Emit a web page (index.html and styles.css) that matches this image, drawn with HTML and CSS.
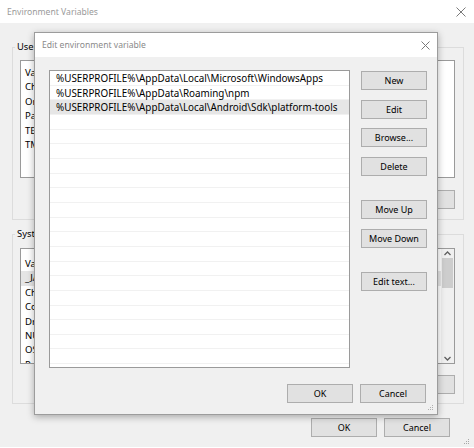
FILE: index.html
```html
<!DOCTYPE html>
<html>
<head>
<meta charset="utf-8">
<title>Edit environment variable</title>
<link rel="stylesheet" href="styles.css">
</head>
<body>
<div class="win">
  <div class="win-title">
    <span>Environment Variables</span>
    <svg class="close" viewBox="0 0 10 10"><path d="M0.5 0.5 L9.5 9.5 M9.5 0.5 L0.5 9.5" stroke="#7a7a7a" stroke-width="1" fill="none"/></svg>
  </div>
  <fieldset class="group user">
    <legend>User variables for user</legend>
    <div class="listview">
      <div class="lv-body">
        <div class="lv-row"><span class="c1">Variable</span><span class="c2">Value</span></div>
        <div class="lv-row"><span class="c1">ChocolateyLastPathUpdate</span><span class="c2">132456789012345678</span></div>
        <div class="lv-row"><span class="c1">OneDrive</span><span class="c2">C:\Users\user\OneDrive</span></div>
        <div class="lv-row"><span class="c1">Path</span><span class="c2">%USERPROFILE%\AppData\Local\Microsoft\WindowsApps;</span></div>
        <div class="lv-row"><span class="c1">TEMP</span><span class="c2">%USERPROFILE%\AppData\Local\Temp</span></div>
        <div class="lv-row"><span class="c1">TMP</span><span class="c2">%USERPROFILE%\AppData\Local\Temp</span></div>
      </div>
    </div>
    <div class="btns">
      <button class="btn wide">New...</button>
      <button class="btn wide">Edit...</button>
      <button class="btn wide">Delete</button>
    </div>
  </fieldset>
  <fieldset class="group sys">
    <legend>System variables</legend>
    <div class="listview sys">
      <div class="lv-body">
        <div class="lv-row"><span class="c1">Variable</span><span class="c2">Value</span></div>
        <div class="lv-row sel"><span class="c1">_JAVA_OPTIONS</span><span class="c2">-Xmx512M</span></div>
        <div class="lv-row"><span class="c1">ChocolateyInstall</span><span class="c2">C:\ProgramData\chocolatey</span></div>
        <div class="lv-row"><span class="c1">ComSpec</span><span class="c2">C:\WINDOWS\system32\cmd.exe</span></div>
        <div class="lv-row"><span class="c1">DriverData</span><span class="c2">C:\Windows\System32\Drivers\DriverData</span></div>
        <div class="lv-row"><span class="c1">NUMBER_OF_PROCESSORS</span><span class="c2">8</span></div>
        <div class="lv-row"><span class="c1">OS</span><span class="c2">Windows_NT</span></div>
        <div class="lv-row"><span class="c1">Path</span><span class="c2">C:\WINDOWS\system32;C:\WINDOWS</span></div>
      </div>
      <div class="vscroll">
        <svg class="arrow" viewBox="0 0 13 8"><path d="M3.5 5.5 L6.5 2.5 L9.5 5.5" stroke="#606060" stroke-width="1.3" fill="none"/></svg>
        <div class="track"><div class="thumb"></div></div>
        <svg class="arrow" viewBox="0 0 13 8"><path d="M3.5 2.5 L6.5 5.5 L9.5 2.5" stroke="#606060" stroke-width="1.3" fill="none"/></svg>
      </div>
    </div>
    <div class="btns">
      <button class="btn wide">New...</button>
      <button class="btn wide">Edit...</button>
      <button class="btn wide">Delete</button>
    </div>
  </fieldset>
  <div class="win-foot">
    <button class="btn">OK</button>
    <button class="btn">Cancel</button>
  </div>
  <svg class="grip win-grip" viewBox="0 0 6 6"><path d="M4 0h1v1H4zM2 2h1v1H2zM4 2h1v1H4zM0 4h1v1H0zM2 4h1v1H2zM4 4h1v1H4z" fill="#a8a8a8"/></svg>
</div>

<div class="dlg">
  <div class="dlg-title">
    <span>Edit environment variable</span>
    <svg class="close small" viewBox="0 0 9 9"><path d="M0.5 0.5 L8.5 8.5 M8.5 0.5 L0.5 8.5" stroke="#7a7a7a" stroke-width="1" fill="none"/></svg>
  </div>
  <div class="dlg-body">
    <div class="dlg-main">
      <div class="pathlist">
        <div class="prow">%USERPROFILE%\AppData\Local\Microsoft\WindowsApps</div>
        <div class="prow">%USERPROFILE%\AppData\Roaming\npm</div>
        <div class="prow sel">%USERPROFILE%\AppData\Local\Android\Sdk\platform-tools</div>
        <div class="prow"></div><div class="prow"></div><div class="prow"></div>
        <div class="prow"></div><div class="prow"></div><div class="prow"></div>
        <div class="prow"></div><div class="prow"></div><div class="prow"></div>
        <div class="prow"></div><div class="prow"></div><div class="prow"></div>
        <div class="prow"></div><div class="prow"></div><div class="prow"></div>
        <div class="prow"></div><div class="prow"></div><div class="prow"></div>
      </div>
      <div class="side">
        <button class="btn">New</button>
        <button class="btn">Edit</button>
        <button class="btn">Browse...</button>
        <button class="btn">Delete</button>
        <button class="btn spaced">Move Up</button>
        <button class="btn">Move Down</button>
        <button class="btn spaced">Edit text...</button>
      </div>
    </div>
    <div class="dlg-foot">
      <button class="btn">OK</button>
      <button class="btn">Cancel</button>
    </div>
  </div>
  <svg class="grip dlg-grip" viewBox="0 0 6 6"><path d="M4 0h1v1H4zM2 2h1v1H2zM4 2h1v1H4zM0 4h1v1H0zM2 4h1v1H2zM4 4h1v1H4z" fill="#b0b0b0"/></svg>
</div>
</body>
</html>
```
FILE: styles.css
```css
* { box-sizing: border-box; }
html, body { margin: 0; padding: 0; }
body {
  width: 474px;
  height: 448px;
  overflow: hidden;
  position: relative;
  background: #ffffff;
  font-family: "Noto Sans", "Segoe UI", sans-serif;
  font-size: 10px;
  color: #000;
}

/* background window */
.win {
  height: 447px;
  background: #f0f0f0;
  display: flex;
  flex-direction: column;
  position: relative;
}
.win-title {
  flex: none;
  height: 23px;
  background: #fff;
  display: flex;
  align-items: center;
  justify-content: space-between;
  padding: 0 8px 0 7px;
  color: #9a9a9a;
  font-size: 8.6px;
}
.close { width: 10px; height: 10px; display: block; }
.close.small { width: 9px; height: 9px; }

.group {
  border: 1px solid #dcdcdc;
  margin: 0 10px 0 12px;
  padding: 6px 8px 10px 7px;
  min-width: 0;
}
.group.user { margin-top: 17px; }
.group.sys { margin-top: 7px; padding-top: 7px; padding-bottom: 9px; }
.group legend {
  padding: 0 2px;
  margin-left: -5px;
  line-height: 14px;
  font-size: 9.4px;
}

.listview {
  background: #fff;
  border: 1px solid #9a9a9a;
  height: 118px;
  overflow: hidden;
  display: flex;
}
.listview.sys { height: 116px; }
.lv-body { flex: 1; padding-top: 5px; min-width: 0; }
.listview.sys .lv-body { padding-top: 8px; }
.lv-row {
  height: 14.4px;
  line-height: 14.4px;
  padding-left: 4px;
  white-space: nowrap;
  display: flex;
  font-size: 9.6px;
}
.lv-row.sel { background: #e5e5e5; }
.lv-row .c1 { width: 150px; flex: none; }
.lv-row .c2 { width: 200px; flex: none; overflow: hidden; text-overflow: ellipsis; }

.vscroll {
  width: 13px;
  flex: none;
  background: #f0f0f0;
  display: flex;
  flex-direction: column;
}
.vscroll .arrow { width: 13px; height: 9px; display: block; flex: none; }
.vscroll .track { flex: 1; padding: 0 1px; }
.vscroll .thumb { height: 30px; background: #cdcdcd; }

.btns {
  display: flex;
  justify-content: flex-end;
  gap: 7px;
  margin-top: 12px;
}
.group.sys .btns { margin-top: 11px; }

.btn {
  width: 66px;
  height: 19px;
  flex: none;
  background: #e1e1e1;
  border: 1px solid #adadad;
  font-family: inherit;
  font-size: 9px;
  color: #000;
  padding: 0;
  margin: 0;
  display: flex;
  align-items: center;
  justify-content: center;
  border-radius: 0;
}
.btn.wide { width: 75px; }

.win-foot {
  display: flex;
  justify-content: flex-end;
  gap: 7px;
  margin-top: 14px;
  padding-right: 24px;
}

.grip { position: absolute; width: 6px; height: 6px; }
.win-grip { right: 4px; bottom: 2px; }

/* foreground dialog */
.dlg {
  position: absolute;
  left: 34px;
  top: 32px;
  width: 404px;
  height: 383px;
  background: #f0f0f0;
  border: 1px solid #9c9c9c;
  box-shadow: 0 2px 7px rgba(0, 0, 0, 0.3);
  display: flex;
  flex-direction: column;
}
.dlg-title {
  flex: none;
  height: 24px;
  background: #fff;
  display: flex;
  align-items: center;
  justify-content: space-between;
  padding: 0 7px;
  color: #8a8a8a;
  font-size: 8.6px;
}
.dlg-body {
  flex: 1;
  padding: 13px 10px 11px 14px;
  display: flex;
  flex-direction: column;
}
.dlg-main { display: flex; gap: 11px; }
.pathlist {
  width: 301px;
  height: 298px;
  flex: none;
  background: #fff;
  border: 1px solid #9a9a9a;
  overflow: hidden;
}
.prow {
  height: 14.67px;
  box-shadow: inset 0 -1px 0 #f1f1f1;
  padding-left: 6px;
  line-height: 14.67px;
  white-space: nowrap;
  font-size: 9.85px;
}
.prow.sel { background: #e6e6e6; }
.side {
  width: 66px;
  flex: none;
  display: flex;
  flex-direction: column;
  gap: 9.67px;
  padding-top: 1px;
}
.side .spaced { margin-top: 14.33px; }
.dlg-foot {
  display: flex;
  justify-content: flex-end;
  gap: 7px;
  margin-top: 16px;
  padding-right: 1px;
}
.dlg-grip { right: 3px; bottom: 3px; }
```
